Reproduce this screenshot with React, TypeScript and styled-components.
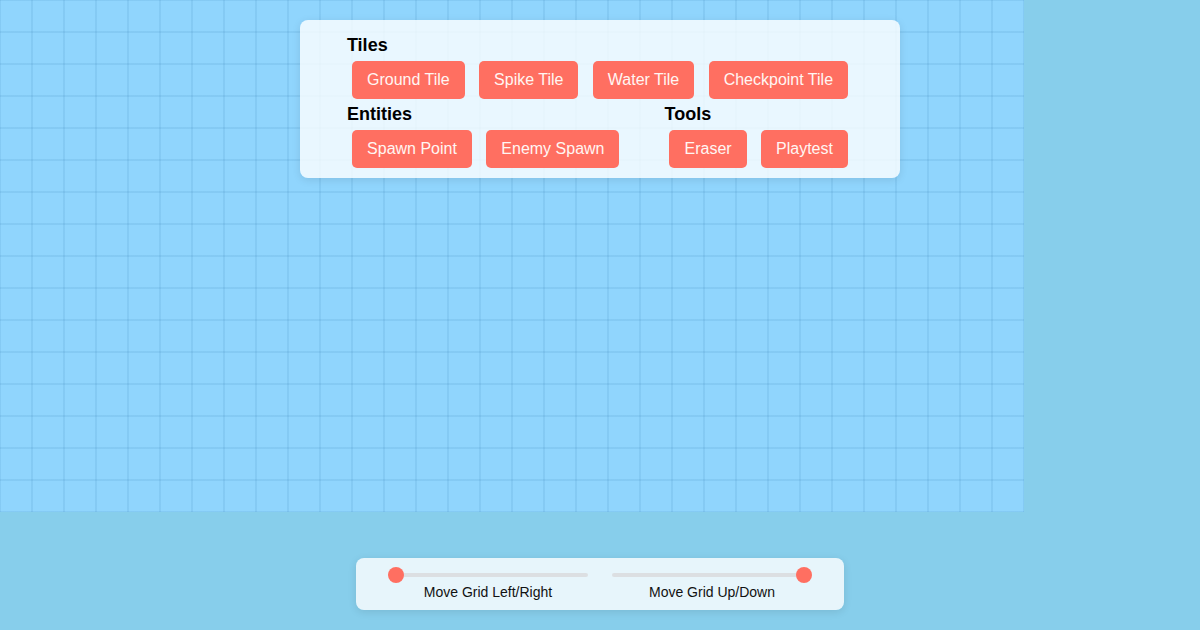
import styled, { createGlobalStyle } from 'styled-components';

const GlobalStyle = createGlobalStyle`
  html, body {
    margin: 0;
    padding: 0;
    width: 1200px;
    height: 630px;
    overflow: hidden;
    background: #87ceeb;
    font-family: 'Liberation Sans', Arial, sans-serif;
  }
`;

const Stage = styled.div`
  position: relative;
  width: 1200px;
  height: 630px;
`;

// the level canvas, 32px cells
const GridCanvas = styled.div`
  width: 1024px;
  height: 512px;
  background-color: #90d5fd;
  background-image:
    repeating-linear-gradient(
      to right,
      rgba(40, 110, 170, 0.11) 0 2px,
      transparent 2px 32px
    ),
    repeating-linear-gradient(
      to bottom,
      rgba(40, 110, 170, 0.11) 0 2px,
      transparent 2px 32px
    );
  background-position: -1px -1px;
`;

const Toolbar = styled.div`
  position: absolute;
  top: 20px;
  left: 300px;
  width: 600px;
  box-sizing: border-box;
  padding: 15px 0 5px;
  display: flex;
  flex-wrap: wrap;
  justify-content: center;
  background: rgba(255, 255, 255, 0.8);
  border-radius: 8px;
  box-shadow: 0 2px 8px rgba(0, 0, 0, 0.1);
`;

const Group = styled.div`
  margin: 0 20px;
`;

const GroupTitle = styled.h3`
  margin: 0;
  font-size: 18px;
  font-weight: bold;
  line-height: 21px;
  color: #000;
`;

const ButtonRow = styled.div`
  display: flex;
  gap: 4.4px;
`;

const ToolButton = styled.button`
  margin: 5px;
  padding: 10px 15px;
  height: 38px;
  border: none;
  border-radius: 5px;
  background: #ff6f61;
  color: #fff6f3;
  font-family: 'Liberation Sans', Arial, sans-serif;
  font-size: 16px;
  line-height: 18px;
  cursor: pointer;
`;

const SliderPanel = styled.div`
  position: absolute;
  left: 356px;
  bottom: 20px;
  width: 488px;
  box-sizing: border-box;
  padding: 9px 20px 10px;
  display: flex;
  background: rgba(255, 255, 255, 0.8);
  border-radius: 8px;
  box-shadow: 0 2px 8px rgba(0, 0, 0, 0.1);
`;

const SliderGroup = styled.div`
  width: 200px;
  margin: 0 12px;
  display: flex;
  flex-direction: column;
  align-items: center;
`;

const Range = styled.input`
  -webkit-appearance: none;
  appearance: none;
  width: 200px;
  height: 16px;
  margin: 0;
  background: transparent;

  &::-webkit-slider-runnable-track {
    height: 4px;
    background: #dcdfe2;
    border-radius: 2px;
  }

  &::-webkit-slider-thumb {
    -webkit-appearance: none;
    width: 16px;
    height: 16px;
    margin-top: -6px;
    border-radius: 50%;
    background: #ff6f61;
    border: none;
  }
`;

const SliderLabel = styled.label`
  margin-top: 1px;
  font-size: 14px;
  line-height: 16px;
  color: #111;
`;

const groups = [
  { title: 'Tiles', items: ['Ground Tile', 'Spike Tile', 'Water Tile', 'Checkpoint Tile'] },
  { title: 'Entities', items: ['Spawn Point', 'Enemy Spawn'] },
  { title: 'Tools', items: ['Eraser', 'Playtest'] },
];

export default function App() {
  return (
    <Stage>
      <GlobalStyle />
      <GridCanvas />
      <Toolbar>
        {groups.map((g) => (
          <Group key={g.title}>
            <GroupTitle>{g.title}</GroupTitle>
            <ButtonRow>
              {g.items.map((item) => (
                <ToolButton key={item}>{item}</ToolButton>
              ))}
            </ButtonRow>
          </Group>
        ))}
      </Toolbar>
      <SliderPanel>
        <SliderGroup>
          <Range type="range" min={0} max={100} defaultValue={0} />
          <SliderLabel>Move Grid Left/Right</SliderLabel>
        </SliderGroup>
        <SliderGroup>
          <Range type="range" min={0} max={100} defaultValue={100} />
          <SliderLabel>Move Grid Up/Down</SliderLabel>
        </SliderGroup>
      </SliderPanel>
    </Stage>
  );
}
